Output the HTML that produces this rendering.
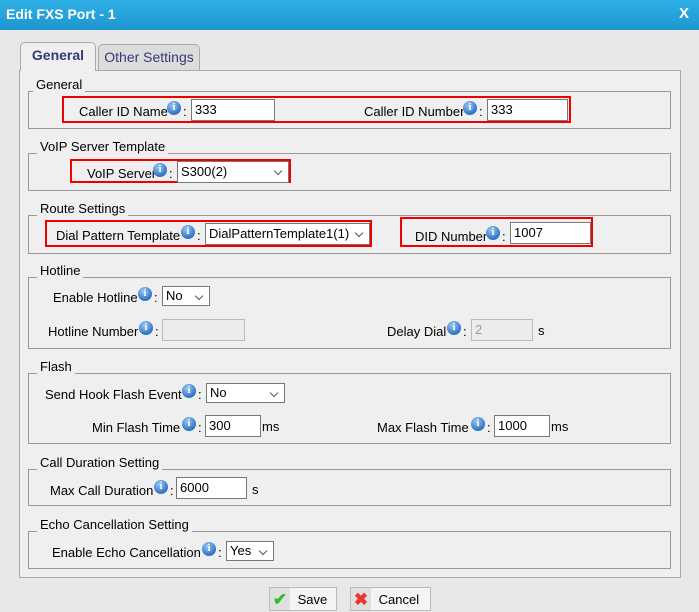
<!DOCTYPE html>
<html><head><meta charset="utf-8"><style>
*{box-sizing:border-box}
body{margin:0;width:699px;height:609px;overflow:hidden;background:#e8e8e8;font-family:"Liberation Sans",Arial,sans-serif;font-size:13px;color:#000;position:relative}
.a{position:absolute;white-space:nowrap}
.title{left:0;top:0;width:699px;height:30px;background:linear-gradient(#2fb0e6,#1e95cf);color:#fff;font-weight:bold;font-size:14px;line-height:28px;padding-left:6px}
.panel{left:19px;top:70px;width:662px;height:508px;border:1px solid #aaa;background:#efefef}
.tab{top:43px;height:28px;border:1px solid #aaa;border-bottom:none;border-radius:5px 5px 0 0;font-size:14px;line-height:25px;color:#333a7a;text-align:center}
.fs{left:28px;width:643px;border:1px solid #999;border-radius:0}
.lg{background:#efefef;padding:0 3px;font-size:13px;line-height:14px}
.i{width:14px;height:14px;border-radius:50%;background:radial-gradient(circle at 40% 30%,#9cc8f2,#2f72c8 70%);color:#fff;font:bold 10px/14px "Liberation Serif",serif;text-align:center}
.in{background:#fff;border:1px solid #777;height:22px;line-height:20px;padding-left:3px;font-size:13px}
.dis{background:#ececec;border-color:#bbb}
.sel::after{content:"";position:absolute;right:7px;top:6px;width:5px;height:5px;border-right:1px solid #555;border-bottom:1px solid #555;transform:rotate(45deg)}
.red{border:2px solid #e00}
.btn{top:587px;height:24px;border:1px solid #bbb;background:#f4f4f4;line-height:24px;padding-left:0}
</style></head><body>
<div class="a title">Edit FXS Port - 1</div>
<div class="a" style="right:10px;top:5px;color:#fff;font-weight:bold;font-size:15px">X</div>

<div class="a tab" style="left:98px;width:102px;top:44px;height:26px;background:#dcdcdc">Other Settings</div>
<div class="a panel"></div>
<div class="a tab" style="left:20px;width:76px;background:#efefef;height:29px;font-weight:bold;top:42px">General</div>

<div class="a fs" style="top:91px;height:38px"></div><div class="a lg" style="left:33px;top:78px">General</div>
<div class="a fs" style="top:153px;height:38px"></div><div class="a lg" style="left:37px;top:140px">VoIP Server Template</div>
<div class="a fs" style="top:215px;height:39px"></div><div class="a lg" style="left:37px;top:202px">Route Settings</div>
<div class="a fs" style="top:277px;height:72px"></div><div class="a lg" style="left:37px;top:264px">Hotline</div>
<div class="a fs" style="top:373px;height:71px"></div><div class="a lg" style="left:37px;top:360px">Flash</div>
<div class="a fs" style="top:469px;height:37px"></div><div class="a lg" style="left:37px;top:456px">Call Duration Setting</div>
<div class="a fs" style="top:531px;height:38px"></div><div class="a lg" style="left:37px;top:518px">Echo Cancellation Setting</div>

<div class="a red" style="left:62px;top:96px;width:509px;height:27px"></div>
<div class="a red" style="left:70px;top:159px;width:221px;height:24px"></div>
<div class="a red" style="left:45px;top:220px;width:327px;height:27px"></div>
<div class="a red" style="left:400px;top:217px;width:193px;height:30px"></div>

<div class="a" style="left:79px;top:104px">Caller ID Name</div><div class="a i" style="left:167px;top:101px">i</div><div class="a" style="left:183px;top:104px">:</div>
<div class="a in" style="left:191px;top:99px;width:84px">333</div>
<div class="a" style="left:364px;top:104px">Caller ID Number</div><div class="a i" style="left:463px;top:101px">i</div><div class="a" style="left:479px;top:104px">:</div>
<div class="a in" style="left:487px;top:99px;width:81px">333</div>

<div class="a" style="left:87px;top:166px">VoIP Server</div><div class="a i" style="left:153px;top:163px">i</div><div class="a" style="left:169px;top:166px">:</div>
<div class="a in sel" style="left:177px;top:161px;width:112px">S300(2)</div>

<div class="a" style="left:56px;top:228px">Dial Pattern Template</div><div class="a i" style="left:181px;top:225px">i</div><div class="a" style="left:197px;top:228px">:</div>
<div class="a in sel" style="left:205px;top:223px;width:165px">DialPatternTemplate1(1)</div>
<div class="a" style="left:415px;top:229px">DID Number</div><div class="a i" style="left:486px;top:226px">i</div><div class="a" style="left:502px;top:229px">:</div>
<div class="a in" style="left:510px;top:222px;width:81px">1007</div>

<div class="a" style="left:53px;top:290px">Enable Hotline</div><div class="a i" style="left:138px;top:287px">i</div><div class="a" style="left:154px;top:290px">:</div>
<div class="a in sel" style="left:162px;top:286px;width:48px;height:20px;line-height:18px">No</div>
<div class="a" style="left:48px;top:324px">Hotline Number</div><div class="a i" style="left:139px;top:321px">i</div><div class="a" style="left:155px;top:324px">:</div>
<div class="a in dis" style="left:162px;top:319px;width:83px"></div>
<div class="a" style="left:387px;top:324px">Delay Dial</div><div class="a i" style="left:447px;top:321px">i</div><div class="a" style="left:463px;top:324px">:</div>
<div class="a in dis" style="left:471px;top:319px;width:62px;color:#999">2</div><div class="a" style="left:538px;top:323px">s</div>

<div class="a" style="left:45px;top:387px">Send Hook Flash Event</div><div class="a i" style="left:182px;top:384px">i</div><div class="a" style="left:198px;top:387px">:</div>
<div class="a in sel" style="left:206px;top:383px;width:79px;height:20px;line-height:18px">No</div>
<div class="a" style="left:92px;top:420px">Min Flash Time</div><div class="a i" style="left:182px;top:417px">i</div><div class="a" style="left:198px;top:420px">:</div>
<div class="a in" style="left:205px;top:415px;width:56px">300</div><div class="a" style="left:262px;top:419px">ms</div>
<div class="a" style="left:377px;top:420px">Max Flash Time</div><div class="a i" style="left:471px;top:417px">i</div><div class="a" style="left:487px;top:420px">:</div>
<div class="a in" style="left:494px;top:415px;width:56px">1000</div><div class="a" style="left:551px;top:419px">ms</div>

<div class="a" style="left:50px;top:483px">Max Call Duration</div><div class="a i" style="left:154px;top:480px">i</div><div class="a" style="left:170px;top:483px">:</div>
<div class="a in" style="left:176px;top:477px;width:71px">6000</div><div class="a" style="left:252px;top:482px">s</div>

<div class="a" style="left:52px;top:545px">Enable Echo Cancellation</div><div class="a i" style="left:202px;top:542px">i</div><div class="a" style="left:218px;top:545px">:</div>
<div class="a in sel" style="left:226px;top:541px;width:48px;height:20px;line-height:18px">Yes</div>

<div class="a btn" style="left:269px;width:68px"><span style="display:inline-block;width:20px;height:22px;background:#e0e0e0;vertical-align:top;color:#3b3;font-weight:bold;font-size:17px;text-align:center">✔</span> <span style="margin-left:4px">Save</span></div>
<div class="a btn" style="left:350px;width:81px"><span style="display:inline-block;width:20px;height:22px;background:#e0e0e0;vertical-align:top;color:#e33;font-weight:bold;font-size:17px;text-align:center">✖</span> <span style="margin-left:4px">Cancel</span></div>
</body></html>
